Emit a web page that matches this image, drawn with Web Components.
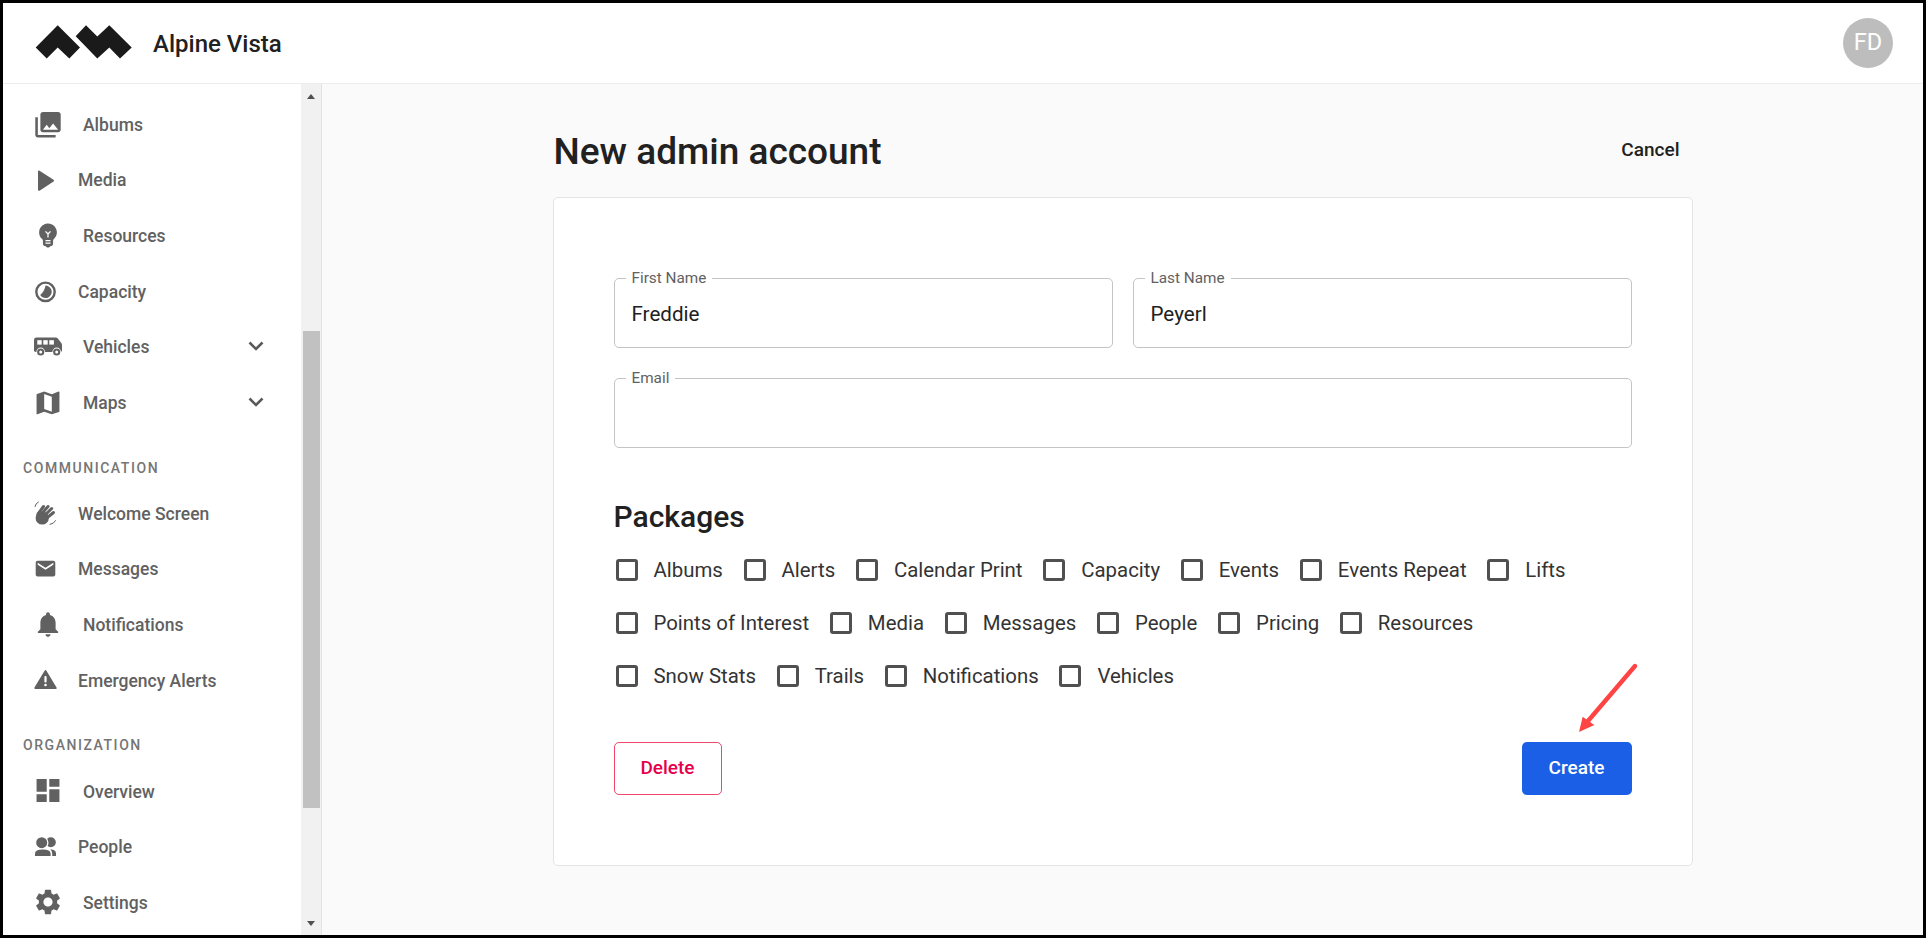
<!DOCTYPE html>
<html lang="en"><head><meta charset="utf-8"><title>Alpine Vista</title>
<style>
html,body{margin:0;padding:0;height:100%;background:#000;overflow:hidden}
body{font-family:Roboto,"Liberation Sans",sans-serif;color:#212121}
app-frame{margin:3px}
</style></head>
<body>
<app-frame>
  <app-header slot="header" brand="Alpine Vista" initials="FD"></app-header>
  <side-nav slot="nav">
    <nav-item icon="albums" tx="83">Albums</nav-item>
    <nav-item icon="media" tx="78">Media</nav-item>
    <nav-item icon="resources" tx="83">Resources</nav-item>
    <nav-item icon="capacity" tx="78">Capacity</nav-item>
    <nav-item icon="vehicles" tx="83" expand>Vehicles</nav-item>
    <nav-item icon="maps" tx="83" expand>Maps</nav-item>
    <nav-section pb="7.4">COMMUNICATION</nav-section>
    <nav-item icon="welcome" tx="78">Welcome Screen</nav-item>
    <nav-item icon="messages" tx="78">Messages</nav-item>
    <nav-item icon="notifications" tx="83">Notifications</nav-item>
    <nav-item icon="emergency" tx="78">Emergency Alerts</nav-item>
    <nav-section pb="8.4">ORGANIZATION</nav-section>
    <nav-item icon="overview" tx="83">Overview</nav-item>
    <nav-item icon="people" tx="78">People</nav-item>
    <nav-item icon="settings" tx="83">Settings</nav-item>
  </side-nav>
  <fake-scrollbar slot="scroll"></fake-scrollbar>
  <page-main slot="main">
    <page-head heading="New admin account" action="Cancel"></page-head>
    <form-card>
      <field-grid>
        <text-field label="First Name" value="Freddie"></text-field>
        <text-field label="Last Name" value="Peyerl"></text-field>
        <text-field wide label="Email" value=""></text-field>
      </field-grid>
      <pkg-title>Packages</pkg-title>
      <pkg-row>
        <check-item>Albums</check-item><check-item>Alerts</check-item><check-item>Calendar Print</check-item><check-item>Capacity</check-item><check-item>Events</check-item><check-item>Events Repeat</check-item><check-item>Lifts</check-item>
      </pkg-row>
      <pkg-row>
        <check-item>Points of Interest</check-item><check-item>Media</check-item><check-item>Messages</check-item><check-item>People</check-item><check-item>Pricing</check-item><check-item>Resources</check-item>
      </pkg-row>
      <pkg-row>
        <check-item>Snow Stats</check-item><check-item>Trails</check-item><check-item>Notifications</check-item><check-item>Vehicles</check-item>
      </pkg-row>
      <form-actions>
        <ui-button kind="danger">Delete</ui-button>
        <ui-button kind="primary">Create</ui-button>
      </form-actions>
      <red-arrow></red-arrow>
    </form-card>
  </page-main>
</app-frame>
<script>
const mat=(s,cx,cy,d,extra='')=>`<g transform="translate(${cx-12*s} ${cy-12*s}) scale(${s})"><path fill-rule="evenodd" d="${d}" ${extra}/></g>`;
const ICONS={
albums:mat(1.27,16,16.75,"M22 16V4c0-1.1-.9-2-2-2H8c-1.1 0-2 .9-2 2v12c0 1.1.9 2 2 2h12c1.1 0 2-.9 2-2zm-11-4l2.03 2.71L16 11l4 5H8l3-4zM2 6v14c0 1.1.9 2 2 2h14v-2H4V6H2z"),
media:`<path d="M7 7.6 21 16.7 7 25.8Z" stroke="currentColor" stroke-width="2" stroke-linejoin="round"/>`,
resources:mat(1.27,16,15.9,"M12,3c-0.46,0-0.93,0.04-1.4,0.14C7.84,3.67,5.64,5.9,5.12,8.66c-0.48,2.61,0.48,5.01,2.22,6.56C7.77,15.6,8,16.13,8,16.69V19c0,1.1,0.9,2,2,2h0.28c0.35,0.6,0.98,1,1.72,1s1.38-0.4,1.72-1H14c1.1,0,2-0.9,2-2v-2.31c0-0.55,0.23-1.09,0.64-1.46C18.09,13.95,19,12.08,19,10C19,6.13,15.87,3,12,3z M14,19h-4v-1h4V19z M14,17h-4v-1h4V17z M12.5,11.41V14h-1v-2.59L9.67,9.59l0.71-0.71L12,10.5l1.62-1.62l0.71,0.71L12.5,11.41z"),
capacity:`<circle cx="13.5" cy="16.8" r="9.2" fill="none" stroke="currentColor" stroke-width="2.4"/><path d="M13.5 10.6A6.2 6.2 0 1 1 8.2 20Q12.6 16.5 13.5 10.6Z"/>`,
vehicles:`<path d="M4.5 7.6H23.5Q25 7.6 26 8.8L29.3 13Q30 14 30 15.2V20.3Q30 22 28.3 22H3.7Q2 22 2 20.3V10Q2 7.6 4.5 7.6Z"/><g fill="#fff"><rect x="5.3" y="10.2" width="4.4" height="4.4"/><rect x="11.3" y="10.2" width="4.4" height="4.4"/><rect x="17.3" y="10.2" width="4.6" height="4.4"/><circle cx="8.7" cy="22" r="4.4"/><circle cx="24.7" cy="22" r="4.4"/></g><circle cx="8.7" cy="22" r="3.6"/><circle cx="24.7" cy="22" r="3.6"/><circle cx="8.7" cy="22" r="1.5" fill="#fff"/><circle cx="24.7" cy="22" r="1.5" fill="#fff"/>`,
maps:mat(1.27,16,16.9,"M20.5 3l-.16.03L15 5.1 9 3 3.36 4.9c-.21.07-.36.25-.36.48V20.5c0 .28.22.5.5.5l.16-.03L9 18.9l6 2.1 5.64-1.9c.21-.07.36-.25.36-.48V3.5c0-.28-.22-.5-.5-.5zM15 19l-6-2.11V5l6 2.11V19z"),
welcome:`<g stroke="currentColor" stroke-linecap="round" fill="none"><path stroke-width="3" d="M6 17 11.5 9.5"/><path stroke-width="3" d="M9 17.5 16 9.5"/><path stroke-width="3" d="M11.5 19.5 19.7 11.5"/><path stroke-width="3" d="M13.5 22 21.5 15.5"/><path stroke-width="1" d="M3 9.5Q3.6 6.2 6.4 5"/><path stroke-width="1" d="M18 27.4Q21.6 27 23.6 23.6"/></g><circle cx="10.2" cy="21" r="6.6"/><path d="M4 19 7 14 14 20 10 27Z"/>`,
messages:mat(.98,13.5,15.7,"M20 4H4c-1.1 0-1.99.9-1.99 2L2 18c0 1.1.9 2 2 2h16c1.1 0 2-.9 2-2V6c0-1.1-.9-2-2-2zm0 4l-8 5-8-5V6l8 5 8-5v2z"),
notifications:mat(1.27,16,16.2,"M12 22c1.1 0 2-.9 2-2h-4c0 1.1.89 2 2 2zm6-6v-5c0-3.07-1.64-5.64-4.5-6.32V4c0-.83-.67-1.5-1.5-1.5s-1.5.67-1.5 1.5v.68C7.63 5.36 6 7.92 6 11v5l-2 2v1h16v-1l-2-2z"),
emergency:`<path d="M13.5 7.2 23.6 24H3.4Z" stroke="currentColor" stroke-width="2.2" stroke-linejoin="round"/><g fill="#fff"><rect x="12.4" y="12" width="2.2" height="6.4" rx="1"/><circle cx="13.5" cy="21" r="1.3"/></g>`,
overview:mat(1.27,16,15.5,"M3 13h8V3H3v10zm0 8h8v-6H3v6zm10 0h8V11h-8v10zm0-18v6h8V3h-8z"),
people:`<circle cx="18.8" cy="11.3" r="5"/><circle cx="9.7" cy="11.7" r="6.8" fill="#fff"/><circle cx="9.7" cy="11.7" r="5.5"/><path d="M3 25V22.4Q3 18.5 10.8 18.5 18.6 18.5 18.6 22.4V25Z"/><path d="M19.6 18.4Q24 19 24 22.4V25H20.2V22.4Q20.2 20 18.3 18.6Z"/>`,
settings:mat(1.27,16,16,"M19.14 12.94c.04-.3.06-.61.06-.94 0-.32-.02-.64-.07-.94l2.03-1.58c.18-.14.23-.41.12-.61l-1.92-3.32c-.12-.22-.37-.29-.59-.22l-2.39.96c-.5-.38-1.03-.7-1.62-.94l-.36-2.54c-.04-.24-.24-.41-.48-.41h-3.84c-.24 0-.43.17-.47.41l-.36 2.54c-.59.24-1.13.57-1.62.94l-2.39-.96c-.22-.08-.47 0-.59.22L2.74 8.87c-.12.21-.08.47.12.61l2.03 1.58c-.05.3-.09.63-.09.94s.02.64.07.94l-2.03 1.58c-.18.14-.23.41-.12.61l1.92 3.32c.12.22.37.29.59.22l2.39-.96c.5.38 1.03.7 1.62.94l.36 2.54c.05.24.24.41.48.41h3.84c.24 0 .44-.17.47-.41l.36-2.54c.59-.24 1.13-.56 1.62-.94l2.39.96c.22.08.47 0 .59-.22l1.92-3.32c.12-.22.07-.47-.12-.61l-2.01-1.58zM12 15.6c-1.98 0-3.6-1.62-3.6-3.6s1.62-3.6 3.6-3.6 3.6 1.62 3.6 3.6-1.62 3.6-3.6 3.6z")
};
function def(name,html){
  customElements.define(name,class extends HTMLElement{
    constructor(){super();this.attachShadow({mode:'open'});}
    connectedCallback(){
      this.shadowRoot.innerHTML=typeof html==='function'?html(this):html;
    }
  });
}
def('app-frame',`<style>
:host{display:grid;grid-template-columns:298px 21px 1fr;grid-template-rows:81px 1fr;width:1920px;height:932px;background:#fafafa;overflow:hidden}
.h{grid-column:1/4}
</style><div class="h"><slot name="header"></slot></div><slot name="nav"></slot><slot name="scroll"></slot><slot name="main"></slot>`);
def('app-header',e=>`<style>
:host{display:flex;align-items:center;height:81px;box-sizing:border-box;background:#fff;border-bottom:1px solid #ececec;padding:0 30px 0 29px}
svg{width:100px;height:36px;flex:none;display:block}
.b{margin-left:21px;font:500 24px/1 Roboto,sans-serif;color:#212121;flex:1;padding-top:2px}
.a{width:50px;height:50px;border-radius:50%;background:#bdbdbd;color:#fff;display:flex;align-items:center;justify-content:center;font:400 23.5px/1 Roboto,sans-serif}
</style>
<svg viewBox="0 0 100 36" fill="#1a1a1a"><path d="M3.7 22.5 25.7.3 48 22.5 37.3 33.5 25.7 22.5 14.7 33.5Z"/><path d="M43.7 11.2 54 .3 65.3 11.5 77.3.3 99.7 22.5 88 33.5 77.3 22.5 65.3 33.5Z"/></svg>
<span class="b">${e.getAttribute('brand')}</span><div class="a">${e.getAttribute('initials')}</div>`);
def('side-nav',`<style>:host{display:flex;flex-direction:column;background:#fff;padding-top:12.2px;overflow:hidden;min-height:0}</style><slot></slot>`);
def('nav-item',e=>`<style>
:host{display:flex;align-items:center;height:55.6px;flex:none;padding-left:29px;padding-right:35px;color:#616161}
svg.i{width:32px;height:32px;flex:none;display:block;fill:currentColor}
.t{font:500 17.5px/1 Roboto,sans-serif;margin-left:${e.getAttribute('tx')-64}px;flex:1;white-space:nowrap;padding-top:3px}
svg.c{width:20px;height:20px;flex:none;stroke:#5a5a5a;fill:none;stroke-width:2.5}
</style><svg class="i" viewBox="0 0 32 32">${ICONS[e.getAttribute('icon')]}</svg><span class="t"><slot></slot></span>${e.hasAttribute('expand')?'<svg class="c" viewBox="0 0 20 20"><path d="M3.5 6.5 10 13 16.5 6.5"/></svg>':''}`);
def('nav-section',e=>`<style>
:host{display:flex;align-items:flex-end;height:55.6px;box-sizing:border-box;flex:none;padding:0 0 ${e.getAttribute('pb')}px 20px;color:#757575;font:500 14px/20px Roboto,sans-serif;letter-spacing:1.55px}
</style><slot></slot>`);
def('fake-scrollbar',`<style>
:host{display:flex;flex-direction:column;background:#f1f1f1;border-right:1px solid #e4e4e4;box-sizing:content-box;width:20px;min-height:0;height:851px;position:relative}
.ar{height:24px;display:flex;align-items:center;justify-content:center;flex:none}
.up{width:0;height:0;border:4.5px solid transparent;border-top:0;border-bottom:5px solid #505050}
.dn{width:0;height:0;border:4.5px solid transparent;border-bottom:0;border-top:5px solid #505050}
.tr{flex:1;display:flex;flex-direction:column;align-items:center;padding-top:223px;box-sizing:border-box}
.th{width:17px;height:477px;background:#c1c1c1}
</style><div class="ar"><div class="up"></div></div><div class="tr"><div class="th"></div></div><div class="ar"><div class="dn"></div></div>`);
def('page-main',`<style>:host{display:flex;flex-direction:column;align-items:center;min-width:0;background:#fafafa}</style><slot></slot>`);
def('page-head',e=>`<style>
:host{display:flex;align-items:center;justify-content:space-between;box-sizing:border-box;width:1140px;height:72px;margin:30px 0 11px;padding-right:13px}
h1{margin:0;padding:3px 0 0 1px;font:500 37px/1 Roboto,sans-serif;color:#212121}
span{font:500 19px/1 Roboto,sans-serif;color:#212121;margin-top:-1px}
</style><h1>${e.getAttribute('heading')}</h1><span>${e.getAttribute('action')}</span>`);
def('form-card',`<style>
:host{display:block;position:relative;box-sizing:border-box;width:1140px;background:#fff;border:1px solid #e4e4e4;border-radius:5px;padding:80px 60px 70px}
</style><slot></slot>`);
def('field-grid',`<style>:host{display:grid;grid-template-columns:1fr 1fr;gap:30px 20px}</style><slot></slot>`);
def('text-field',e=>`<style>
:host{display:block;position:relative;height:70px;box-sizing:border-box;border:1px solid #c4c4c4;border-radius:5px;${e.hasAttribute('wide')?'grid-column:1/3;':''}}
.l{position:absolute;left:11px;top:-10px;padding:0 6px;background:#fff;font:400 15.3px/18px Roboto,sans-serif;color:#616161}
.v{display:flex;align-items:center;box-sizing:border-box;height:100%;padding:2px 0 0 17px;font:400 20.6px/1 Roboto,sans-serif;color:#212121}
</style><span class="l">${e.getAttribute('label')}</span><div class="v">${e.getAttribute('value')}</div>`);
def('pkg-title',`<style>:host{display:block;height:40px;margin:48.5px 0 7px;font:500 30px/40px Roboto,sans-serif;color:#212121}</style><slot></slot>`);
def('pkg-row',`<style>:host{display:flex;align-items:center;height:53px;gap:20.7px;padding-left:2px}</style><slot></slot>`);
def('check-item',`<style>
:host{display:inline-flex;align-items:center;gap:16px;font:400 20.4px/1 Roboto,sans-serif;color:#333;white-space:nowrap}
i{display:block;width:22px;height:22px;box-sizing:border-box;border:3px solid #505050;border-radius:3px;flex:none}
</style><i></i><slot></slot>`);
def('form-actions',`<style>:host{display:flex;justify-content:space-between;margin-top:39px}</style><slot></slot>`);
def('ui-button',e=>{const p=e.getAttribute('kind')==='primary';return `<style>
:host{display:flex;align-items:center;justify-content:center;box-sizing:border-box;height:53px;width:${p?110:108}px;padding-bottom:2px;border-radius:5px;font:500 19px/1 Roboto,sans-serif;
${p?'background:#1a5fe6;color:#fff;':'background:#fff;color:#e6004c;border:1px solid #f2476b;'}}
</style><slot></slot>`});
def('red-arrow',`<style>:host{display:block;position:absolute;left:1014px;top:459px;width:80px;height:90px}svg{display:block}</style>
<svg width="80" height="90" viewBox="0 0 80 90"><path d="M67 9 20 64" stroke="#ff4444" stroke-width="4.4" stroke-linecap="round" fill="none"/><path d="M11 75 14.7 59.7 26.3 68Z" fill="#ff4444"/></svg>`);
</script>
</body></html>
